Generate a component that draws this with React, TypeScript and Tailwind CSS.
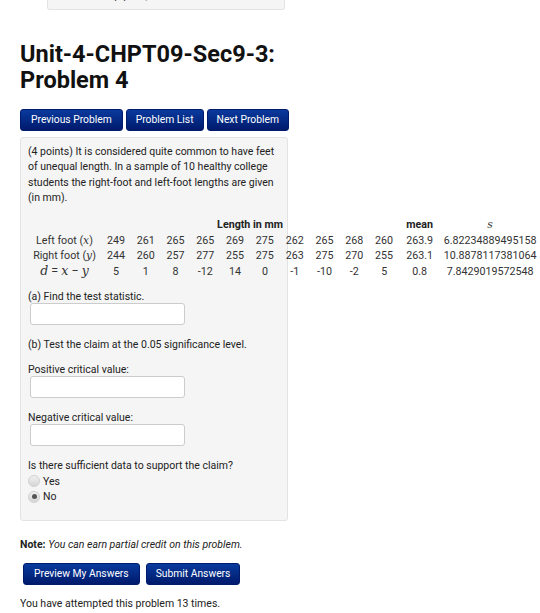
import React from "react";

const btn =
  "h-[22px] px-[9px] rounded-[3px] text-white text-[10.3px] leading-[20px] bg-gradient-to-b from-[#0b3a9e] to-[#001a6c] border border-[#001a6c] whitespace-nowrap";

const left = [249, 261, 265, 265, 269, 275, 262, 265, 268, 260];
const right = [244, 260, 257, 277, 255, 275, 263, 275, 270, 255];
const diff = [5, 1, 8, -12, 14, 0, -1, -10, -2, 5];

function Radio({ checked }: { checked?: boolean }) {
  return (
    <span className="inline-flex items-center justify-center w-[12px] h-[12px] rounded-full bg-gradient-to-b from-[#f0f0f0] to-[#d6d6d6] border border-[#d0d0d0] mr-[3px]">
      {checked && <span className="w-[5px] h-[5px] rounded-full bg-[#555]" />}
    </span>
  );
}

function Row({ label, vals, mean, s }: { label: React.ReactNode; vals: number[]; mean: string; s: string }) {
  return (
    <tr className="h-[15px]">
      <td className="text-center whitespace-nowrap">{label}</td>
      {vals.map((v, i) => (
        <td key={i} className="text-center">
          {v}
        </td>
      ))}
      <td className="text-center">{mean}</td>
      <td className="text-center whitespace-nowrap">{s}</td>
    </tr>
  );
}

const mi = "italic font-['DejaVu_Serif','Liberation_Serif',serif]";
const input = "ml-[2px] w-[155px] h-[22px] bg-white border border-[#cccccc] rounded-[3px]";

export default function App() {
  return (
    <div className="min-h-[613px] bg-white font-['Roboto',sans-serif] text-[#222] pl-[20px] overflow-hidden">
      <div className="ml-[27px] w-[238px] h-[10px] overflow-hidden bg-[#f5f5f5] border border-t-0 border-[#e3e3e3] rounded-b-[3px]">
        <div className="-mt-[12px] pl-[50px] text-[11px] text-[#333] whitespace-nowrap">Help prob, </div>
      </div>

      <h1 className="mt-[31px] text-[23.5px] leading-[26px] font-bold text-[#111]">
        Unit-4-CHPT09-Sec9-3:
        <br />
        Problem 4
      </h1>

      <div className="mt-[16px] flex gap-[3px]">
        <button className={btn + " px-[10px]"}>Previous Problem</button>
        <button className={btn}>Problem List</button>
        <button className={btn}>Next Problem</button>
      </div>

      <div className="mt-[6px] w-[268px] h-[384px] bg-[#f5f5f5] border border-[#e3e3e3] rounded-[3px] pl-[7px] pt-[6px] text-[10.5px] leading-[15.3px] overflow-visible">
        <p className="w-[252px]">
          (4 points) It is considered quite common to have feet of unequal length. In a sample of 10 healthy college
          students the right-foot and left-foot lengths are given (in mm).
        </p>

        <table className="mt-[10px] table-fixed border-collapse text-[10.7px] leading-[15px] text-[#333] w-[512px]">
          <colgroup>
            <col className="w-[73px]" />
            {left.map((_, i) => (
              <col key={i} className="w-[29.8px]" />
            ))}
            <col className="w-[41px]" />
            <col className="w-[100px]" />
          </colgroup>
          <tbody>
            <tr className="h-[18px]">
              <td />
              <td colSpan={10} className="text-center font-bold text-[#222]">
                Length in mm
              </td>
              <td className="text-center font-bold text-[#222]">mean</td>
              <td className={"text-center " + mi}>s</td>
            </tr>
            <Row
              label={
                <>
                  Left foot (<span className={mi}>x</span>)
                </>
              }
              vals={left}
              mean="263.9"
              s="6.82234889495158"
            />
            <Row
              label={
                <>
                  Right foot (<span className={mi}>y</span>)
                </>
              }
              vals={right}
              mean="263.1"
              s="10.8878117381064"
            />
            <Row
              label={
                <span className="text-[12.5px]">
                  <span className={mi}>d</span> = <span className={mi}>x</span> − <span className={mi}>y</span>
                </span>
              }
              vals={diff}
              mean="0.8"
              s="7.8429019572548"
            />
          </tbody>
        </table>

        <p className="mt-[10px]">(a) Find the test statistic.</p>
        <div className={input + " -mt-[1px]"} />

        <p className="mt-[12px]">(b) Test the claim at the 0.05 significance level.</p>

        <p className="mt-[9px]">Positive critical value:</p>
        <div className={input + " -mt-[1px]"} />

        <p className="mt-[12px]">Negative critical value:</p>
        <div className={input + " -mt-[1px]"} />

        <p className="mt-[12px]">Is there sufficient data to support the claim?</p>
        <div className="flex items-center h-[15.5px]">
          <Radio />
          <span>Yes</span>
        </div>
        <div className="flex items-center h-[15.5px]">
          <Radio checked />
          <span>No</span>
        </div>
      </div>

      <p className="mt-[16px] text-[10.5px] leading-[15px]">
        <span className="font-bold">Note:</span> <span className="italic">You can earn partial credit on this problem.</span>
      </p>

      <div className="mt-[11px] ml-[3px] flex gap-[6px]">
        <button className={btn + " px-[10px]"}>Preview My Answers</button>
        <button className={btn}>Submit Answers</button>
      </div>

      <p className="mt-[11px] text-[10.5px] leading-[15px]">You have attempted this problem 13 times.</p>
    </div>
  );
}
